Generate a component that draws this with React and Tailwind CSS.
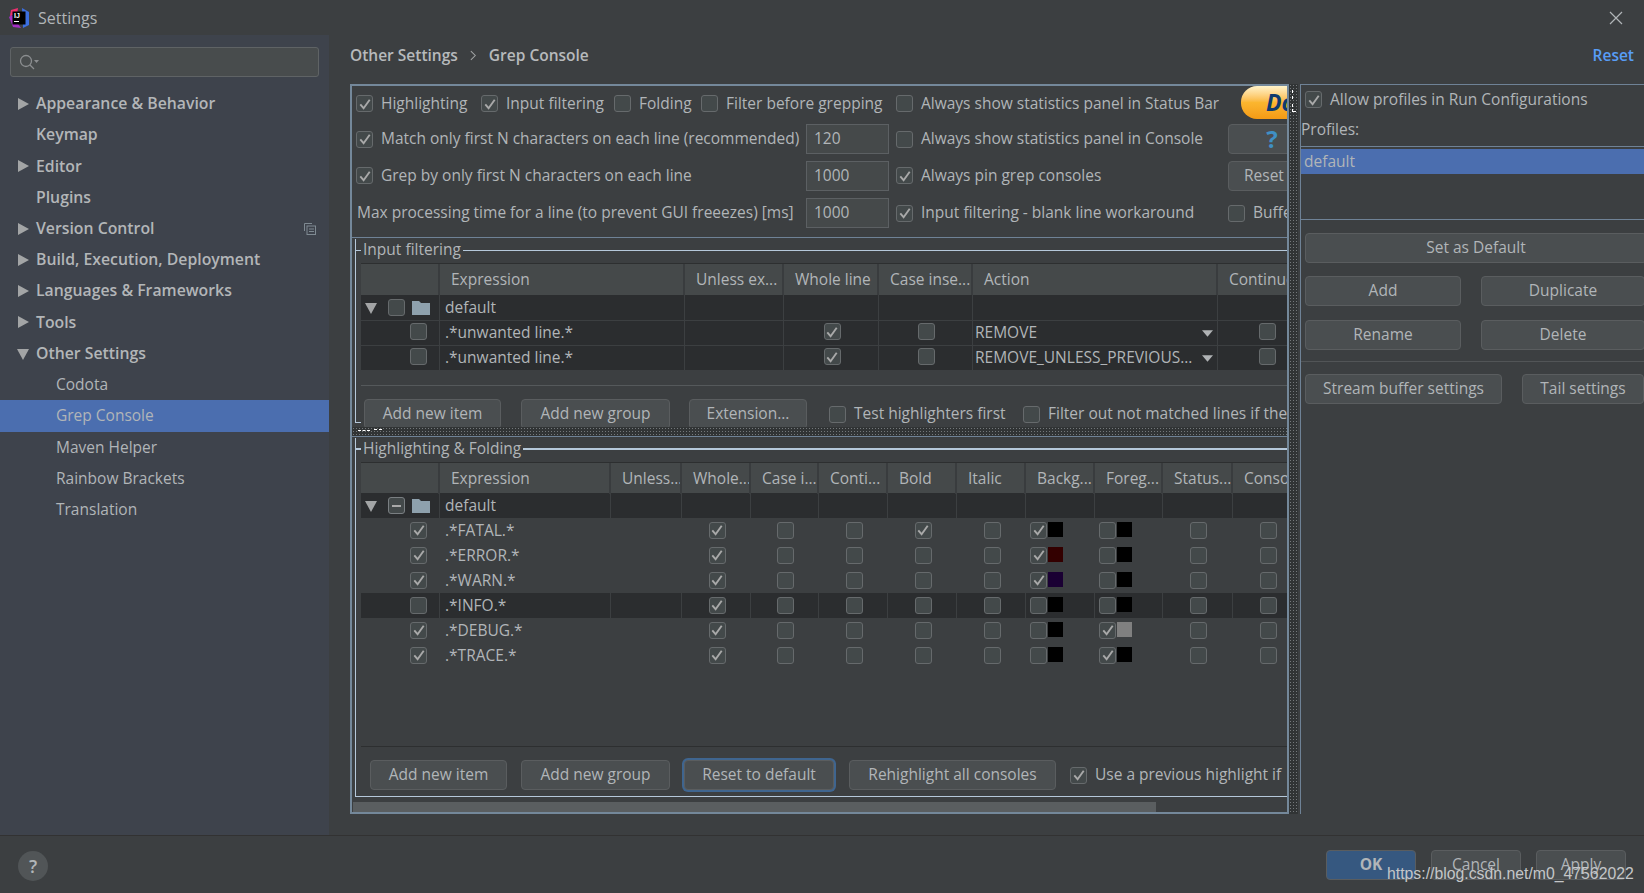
import React from "react";

const Check = () => (
  <svg viewBox="0 0 17 17" className="w-[16px] h-[16px] shrink-0">
    <path d="M3.5 9 L7 13 L13.5 4" fill="none" stroke="#a9a9a9" strokeWidth="2" />
  </svg>
);

const Cb = ({ on, dash, strong }) => (
  <span
    className={`w-[17px] h-[17px] shrink-0 rounded-[3px] border-[1.5px] bg-[#43494a] flex items-center justify-center ${
      strong ? "border-[#7a7f82]" : "border-[#666a6c]"
    }`}
  >
    {on && <Check />}
    {dash && <span className="w-[9px] h-[2px] bg-[#a9a9a9]" />}
  </span>
);

const Opt = ({ on, label, className = "" }) => (
  <div className={`flex items-center gap-2 shrink-0 ${className}`}>
    <Cb on={on} />
    <span className="whitespace-nowrap">{label}</span>
  </div>
);

const Btn = ({ children, className = "" }) => (
  <div
    className={`h-[30px] shrink-0 rounded-[4px] border border-[#5a5d5f] bg-[#4a4e50] flex items-center justify-center whitespace-nowrap ${className}`}
  >
    {children}
  </div>
);

const NumField = ({ value }) => (
  <div className="w-[83px] h-[30px] shrink-0 border border-[#5c6063] bg-[#45494a] pl-[7px] flex items-center">
    {value}
  </div>
);

const Arrow = ({ down, className = "" }) => (
  <svg viewBox="0 0 12 12" className={`w-[12px] h-[12px] shrink-0 ${className}`}>
    <polygon points={down ? "0,1 12,1 6,12" : "1,0 12,6 1,12"} fill="#a3a5a6" />
  </svg>
);

const Folder = () => (
  <svg viewBox="0 0 18 14" className="w-[18px] h-[14px]">
    <path d="M0 0 H7 L9 2 H18 V14 H0 Z" fill="#8ea1ad" />
  </svg>
);

const menu = [
  ["Appearance & Behavior", true],
  ["Keymap"],
  ["Editor", true],
  ["Plugins"],
  ["Version Control", true],
  ["Build, Execution, Deployment", true],
  ["Languages & Frameworks", true],
  ["Tools", true],
];
const subMenu = ["Codota", "Grep Console", "Maven Helper", "Rainbow Brackets", "Translation"];

const Sidebar = () => (
  <div className="w-[329px] shrink-0 bg-[#3e434c]">
    <div className="h-[53.5px] pt-[12px] px-[10px]">
      <div className="h-[30px] w-[309px] rounded-[3px] border border-[#5f6365] bg-[#484c4d] flex items-center pl-[7px]">
        <svg viewBox="0 0 22 18" className="w-[22px] h-[18px]">
          <circle cx="8" cy="8" r="5.5" fill="none" stroke="#8b8e90" strokeWidth="1.3" />
          <path d="M12 12 L16 16" stroke="#8b8e90" strokeWidth="1.3" />
          <polygon points="16,7 21,7 18.5,10" fill="#8b8e90" />
        </svg>
      </div>
    </div>
    {menu.map(([name, arrow]) => (
      <div key={name} className="h-[31.2px] flex items-center font-semibold text-[15.8px] text-[#b3b6b8] pl-[17px]">
        {arrow ? <Arrow /> : <span className="w-[12px]" />}
        <span className="ml-[7px]">{name}</span>
        {name === "Version Control" && (
          <svg viewBox="0 0 12 12" className="w-[12px] h-[12px] ml-auto mr-[13px]">
            <path d="M0.5 8 V0.5 H8" fill="none" stroke="#7f8a92" />
            <rect x="3" y="3" width="8.5" height="8.5" fill="none" stroke="#7f8a92" />
            <path d="M5 6 H10 M5 8.5 H10" stroke="#7f8a92" />
          </svg>
        )}
      </div>
    ))}
    <div className="h-[31.2px] flex items-center font-semibold text-[15.8px] text-[#b3b6b8] pl-[17px]">
      <Arrow down />
      <span className="ml-[7px]">Other Settings</span>
    </div>
    {subMenu.map((name) => (
      <div
        key={name}
        className={`h-[31.2px] flex items-center pl-[56px] ${name === "Grep Console" ? "bg-[#4b6eaf]" : ""}`}
      >
        {name}
      </div>
    ))}
  </div>
);

const Head = ({ cols, labels }) => (
  <div className="h-[32px] flex bg-[#45494a] border-t border-[#2d2f30]">
    {cols.map((w, i) => (
      <div
        key={i}
        style={{ width: w }}
        className="shrink-0 border-r-2 border-[#393c3e] pl-[11px] flex items-center whitespace-nowrap overflow-hidden"
      >
        {labels[i]}
      </div>
    ))}
  </div>
);

const Row = ({ cols, cells, dark, className = "" }) => (
  <div className={`h-[25px] flex ${dark ? "bg-[#2b2d2f]" : ""} ${className}`}>
    {cols.map((w, i) => (
      <div
        key={i}
        style={{ width: w }}
        className={`shrink-0 flex items-center border-r ${dark ? "border-[#3c3f41]" : "border-transparent"}`}
      >
        {cells[i]}
      </div>
    ))}
  </div>
);

const center = (on) => (
  <div className="w-full flex justify-center pl-[2px] -mt-[1px]">
    <Cb on={on} />
  </div>
);
const centerUp = (on) => (
  <div className="w-full flex justify-center pl-[2px] -mt-[3px]">
    <Cb on={on} />
  </div>
);
const exprCell = (text) => <span className="pl-[5px] whitespace-nowrap">{text}</span>;
const treeCell = (dash) => (
  <div className="flex items-center pl-[4px] gap-[11px]">
    <Arrow down />
    <Cb dash={dash} strong={dash} />
    <span className="-ml-[4px]"><Folder /></span>
  </div>
);
const leafCell = (on, up) => (
  <div className={`w-full flex pl-[49px] ${up ? "-mt-[3px]" : "-mt-[1px]"}`}>
    <Cb on={on} />
  </div>
);

const inputCols = [79, 245, 99, 95, 94, 245, 97];
const inputLabels = ["", "Expression", "Unless ex...", "Whole line", "Case inse...", "Action", "Continue"];

const actionCell = (text) => (
  <div className="w-full flex items-center pl-[2px] pr-[4px] justify-between whitespace-nowrap">
    <span>{text}</span>
    <svg viewBox="0 0 10 6" className="w-[11px] h-[7px]"><polygon points="0,0 10,0 5,6" fill="#b0b3b5" /></svg>
  </div>
);

const inputRow = (text, action) => (
  <Row
    dark
    className="border-t border-[#3c3f41]"
    cols={inputCols}
    cells={[leafCell(false, true), exprCell(text), "", centerUp(true), centerUp(false), actionCell(action), centerUp(false)]}
  />
);

const hlCols = [79, 171, 71, 69, 68, 69, 69, 69, 69, 68, 70, 70];
const hlLabels = ["", "Expression", "Unless...", "Whole...", "Case i...", "Conti...", "Bold", "Italic", "Backg...", "Foreg...", "Status...", "Console"];

const ColorCell = ({ on, color }) => (
  <div className="flex items-center pl-[4px] -mt-[1px]">
    <Cb on={on} />
    <span className="w-[15px] h-[15px] ml-px -mt-[1px]" style={{ background: color }} />
  </div>
);

const hlRows = [
  { name: ".*FATAL.*", on: true, bold: true, bgOn: true, bg: "#000000", fgOn: false, fg: "#000000" },
  { name: ".*ERROR.*", on: true, bold: false, bgOn: true, bg: "#330000", fgOn: false, fg: "#000000" },
  { name: ".*WARN.*", on: true, bold: false, bgOn: true, bg: "#1a0033", fgOn: false, fg: "#000000" },
  { name: ".*INFO.*", on: false, bold: false, bgOn: false, bg: "#000000", fgOn: false, fg: "#000000", dark: true },
  { name: ".*DEBUG.*", on: true, bold: false, bgOn: false, bg: "#000000", fgOn: true, fg: "#808080" },
  { name: ".*TRACE.*", on: true, bold: false, bgOn: false, bg: "#000000", fgOn: true, fg: "#000000" },
];

const Title = ({ children, thick, className = "" }) => (
  <div className={`h-[22px] flex items-center -ml-px ${className}`}>
    <span className={`w-[6px] bg-[#b5c8da] ${thick ? "h-[2px]" : "h-px"}`} />
    <span className="px-[2px] whitespace-nowrap">{children}</span>
    <span className={`flex-1 bg-[#b5c8da] ${thick ? "h-[2px]" : "h-px"}`} />
  </div>
);

const dots =
  "bg-[#313435] bg-[radial-gradient(#74787b_38%,transparent_44%)] bg-[length:3px_3px]";

const Options = () => (
  <div className="h-[151px] pl-[4px]">
    <div className="h-[35px] flex items-center">
      <Opt on label="Highlighting" className="w-[125px]" />
      <Opt on label="Input filtering" className="w-[133px]" />
      <Opt label="Folding" className="w-[87px]" />
      <Opt label="Filter before grepping" className="w-[195px]" />
      <Opt label="Always show statistics panel in Status Bar" className="w-[345px]" />
      <div className="w-[80px] h-[33px] shrink-0 -mt-[2px] rounded-[16px] bg-gradient-to-b from-[#fff3c9] via-[#fbb62f] to-[#f49a14] pl-[25px] flex items-center text-[23px] italic font-bold text-[#0f3a6d]">
        Donate
      </div>
    </div>
    <div className="h-[36px] flex items-center">
      <Opt on label="Match only first N characters on each line (recommended)" className="w-[450px]" />
      <NumField value="120" />
      <Opt label="Always show statistics panel in Console" className="w-[332px] ml-[7px]" />
      <Btn className="w-[100px] pr-[12px] text-[24px] font-bold text-[#3f8fc4]">?</Btn>
    </div>
    <div className="h-[37px] flex items-center">
      <Opt on label="Grep by only first N characters on each line" className="w-[450px]" />
      <NumField value="1000" />
      <Opt on label="Always pin grep consoles" className="w-[332px] ml-[7px]" />
      <Btn className="w-[100px] justify-start pl-[15px]">Reset</Btn>
    </div>
    <div className="h-[38px] flex items-center">
      <span className="w-[450px] shrink-0 pl-[1px] whitespace-nowrap">Max processing time for a line (to prevent GUI freeezes) [ms]</span>
      <NumField value="1000" />
      <Opt on label="Input filtering - blank line workaround" className="w-[332px] ml-[7px]" />
      <Opt label="Buffer" />
    </div>
  </div>
);

const InputFiltering = () => (
  <div className="h-[190px] shrink-0 overflow-hidden border-t border-[#6f8296] pl-[3px] pt-px">
    <div className="h-[184px] border-l border-[#b5c8da] relative">
      <Title>Input filtering</Title>
      <div className="ml-[5px] mt-[2px] w-[1000px]">
        <Head cols={inputCols} labels={inputLabels} />
        <Row dark cols={inputCols} cells={[treeCell(false), exprCell("default")]} />
        {inputRow(".*unwanted line.*", "REMOVE")}
        {inputRow(".*unwanted line.*", "REMOVE_UNLESS_PREVIOUS...")}
        <div className="h-[16px] border-b border-[#55595b]" />
      </div>
      <div className="flex items-center mt-[13px] pl-[8px]">
        <Btn className="w-[137px]">Add new item</Btn>
        <Btn className="w-[149px] ml-[20px]">Add new group</Btn>
        <Btn className="w-[118px] ml-[19px]">Extension...</Btn>
        <Opt label="Test highlighters first" className="ml-[22px] w-[194px]" />
        <Opt label="Filter out not matched lines if the" />
      </div>
      <span className="absolute left-0 bottom-0 w-[5px] h-px bg-[#b5c8da]" />
    </div>
  </div>
);

const Highlighting = () => (
  <div className="flex-1 min-h-0 border-t border-[#6f8296] pl-[3px]">
    <div className="h-[359px] border-l border-[#b5c8da] border-b">
      <Title thick className="mt-px">Highlighting &amp; Folding</Title>
      <div className="ml-[5px] mt-[2px] w-[1000px] h-[285px] border-b border-[#2d2f30]">
        <div className="-mb-px">
          <Head cols={hlCols} labels={hlLabels} />
        </div>
        <Row dark cols={hlCols} cells={[treeCell(true), exprCell("default")]} />
        {hlRows.map((r) => (
          <Row
            key={r.name}
            dark={r.dark}
            cols={hlCols}
            cells={[
              leafCell(r.on),
              exprCell(r.name),
              "",
              center(true),
              center(false),
              center(false),
              center(r.bold),
              center(false),
              <ColorCell on={r.bgOn} color={r.bg} />,
              <ColorCell on={r.fgOn} color={r.fg} />,
              center(false),
              center(false),
            ]}
          />
        ))}
      </div>
      <div className="flex items-center mt-[13px] pl-[14px]">
        <Btn className="w-[137px]">Add new item</Btn>
        <Btn className="w-[149px] ml-[14px]">Add new group</Btn>
        <Btn className="w-[150px] ml-[14px] border-[#3f658f] ring-2 ring-[#3f658f]">Reset to default</Btn>
        <Btn className="w-[207px] ml-[15px]">Rehighlight all consoles</Btn>
        <Opt on label="Use a previous highlight if" className="ml-[14px]" />
      </div>
    </div>
    <div className="h-[17px] -ml-[2px] pt-[5px]">
      <div className="h-[11px] w-[803px] bg-[#5a5e60]" />
    </div>
  </div>
);

const ProfilesPanel = () => (
  <div className="w-[420px] shrink-0 h-[730px] border-l border-t border-[#6f8296]">
    <div className="h-[29px] flex items-center pl-[4px]">
      <Opt on label="Allow profiles in Run Configurations" />
    </div>
    <div className="h-[32px] flex items-center">Profiles:</div>
    <div className="h-[74px] border-t border-b border-[#6f8296] pt-[2px]">
      <div className="h-[25px] bg-[#4b6eaf] pl-[3px] pt-px flex items-center">default</div>
    </div>
    <div className="pl-[4px] pt-[13px]">
      <Btn className="w-[342px]">Set as Default</Btn>
      <div className="flex gap-[20px] mt-[13px]">
        <Btn className="w-[156px]">Add</Btn>
        <Btn className="w-[164px]">Duplicate</Btn>
      </div>
      <div className="flex gap-[20px] mt-[14px]">
        <Btn className="w-[156px]">Rename</Btn>
        <Btn className="w-[164px]">Delete</Btn>
      </div>
    </div>
    <div className="mt-[11px] border-t border-[#525557] pl-[4px] pt-[12px] flex gap-[20px]">
      <Btn className="w-[197px]">Stream buffer settings</Btn>
      <Btn className="w-[122px]">Tail settings</Btn>
    </div>
  </div>
);

const Dashes = ({ className = "" }) => (
  <span className={`absolute border-dashed border-white ${className}`} />
);

export default function App() {
  return (
    <div className="w-[1644px] h-[893px] overflow-hidden relative flex flex-col bg-[#3c3f41] text-[#b1b5b8] text-[15.5px] font-['Open_Sans',sans-serif]">
      <div className="h-[35px] shrink-0 flex items-center pl-[9px]">
        <svg viewBox="0 0 20 20" className="w-[20px] h-[20px]">
          <path d="M2 2 L9 0 L8 6 L1 8 Z" fill="#ee2f6f" />
          <path d="M13 0 L20 4 L20 17 L14 20 Z" fill="#3c6fe0" />
          <path d="M0 9 L4 19 L12 20 L3 7 Z" fill="#a52fc4" />
          <rect x="3.5" y="3.5" width="13" height="13" fill="#000" />
          <text x="5" y="10" fontSize="7" fontWeight="700" fill="#fff" fontFamily="Liberation Sans">IJ</text>
          <rect x="5" y="13" width="5" height="1" fill="#fff" />
        </svg>
        <span className="ml-[9px] mt-px text-[16px]">Settings</span>
        <svg viewBox="0 0 14 14" className="w-[14px] h-[14px] ml-auto mr-[21px]">
          <path d="M1 1 L13 13 M13 1 L1 13" stroke="#b1b5b8" strokeWidth="1.2" />
        </svg>
      </div>

      <div className="h-[800px] shrink-0 flex">
        <Sidebar />
        <div className="flex-1 min-w-0 overflow-hidden">
          <div className="h-[49px] pl-[21px] pr-[10px] pb-[8px] flex items-center font-semibold text-[#b7babc]">
            <span>Other Settings</span>
            <svg viewBox="0 0 8 12" className="w-[7px] h-[11px] mx-[12px]">
              <path d="M1 1 L6 6 L1 11" fill="none" stroke="#a3a5a6" strokeWidth="1.2" />
            </svg>
            <span>Grep Console</span>
            <span className="ml-auto text-[#589df6]">Reset</span>
          </div>
          <div className="flex pl-[21px]">
            <div className="w-[939px] h-[730px] shrink-0 border-2 border-[#74889a] overflow-hidden flex flex-col">
              <Options />
              <InputFiltering />
              <div className={`h-[9px] shrink-0 relative ${dots}`}>
                <Dashes className="left-[6px] top-[3px] w-[12px] border-t" />
                <Dashes className="left-[22px] top-[2px] w-[8px] border-t" />
              </div>
              <Highlighting />
            </div>
            <div className={`w-[9px] mr-[2px] h-[730px] shrink-0 relative ${dots}`}>
              <Dashes className="left-[3px] top-[6px] h-[9px] border-l" />
              <Dashes className="left-[3px] top-[20px] w-[4px] h-[8px] border-l border-b" />
            </div>
            <ProfilesPanel />
          </div>
        </div>
      </div>

      <div className="flex-1 border-t border-[#323232] flex items-start pt-[14px] pl-[18px] pr-[18px]">
        <div className="w-[30px] h-[30px] mt-px rounded-full bg-[#515557] flex items-center justify-center font-semibold text-[18px] text-[#b1b5b8]">?</div>
        <div className="ml-auto flex gap-[15px]">
          <Btn className="w-[90px] bg-[#365880] border-[#4c708c] font-bold">OK</Btn>
          <Btn className="w-[90px]">Cancel</Btn>
          <Btn className="w-[90px]">Apply</Btn>
        </div>
      </div>

      <span className="absolute left-[1387px] top-[862px] text-[15.8px] text-[#c4c6c8] whitespace-nowrap font-['Liberation_Sans',sans-serif]">
        https://blog.csdn.net/m0_47562022
      </span>
    </div>
  );
}
